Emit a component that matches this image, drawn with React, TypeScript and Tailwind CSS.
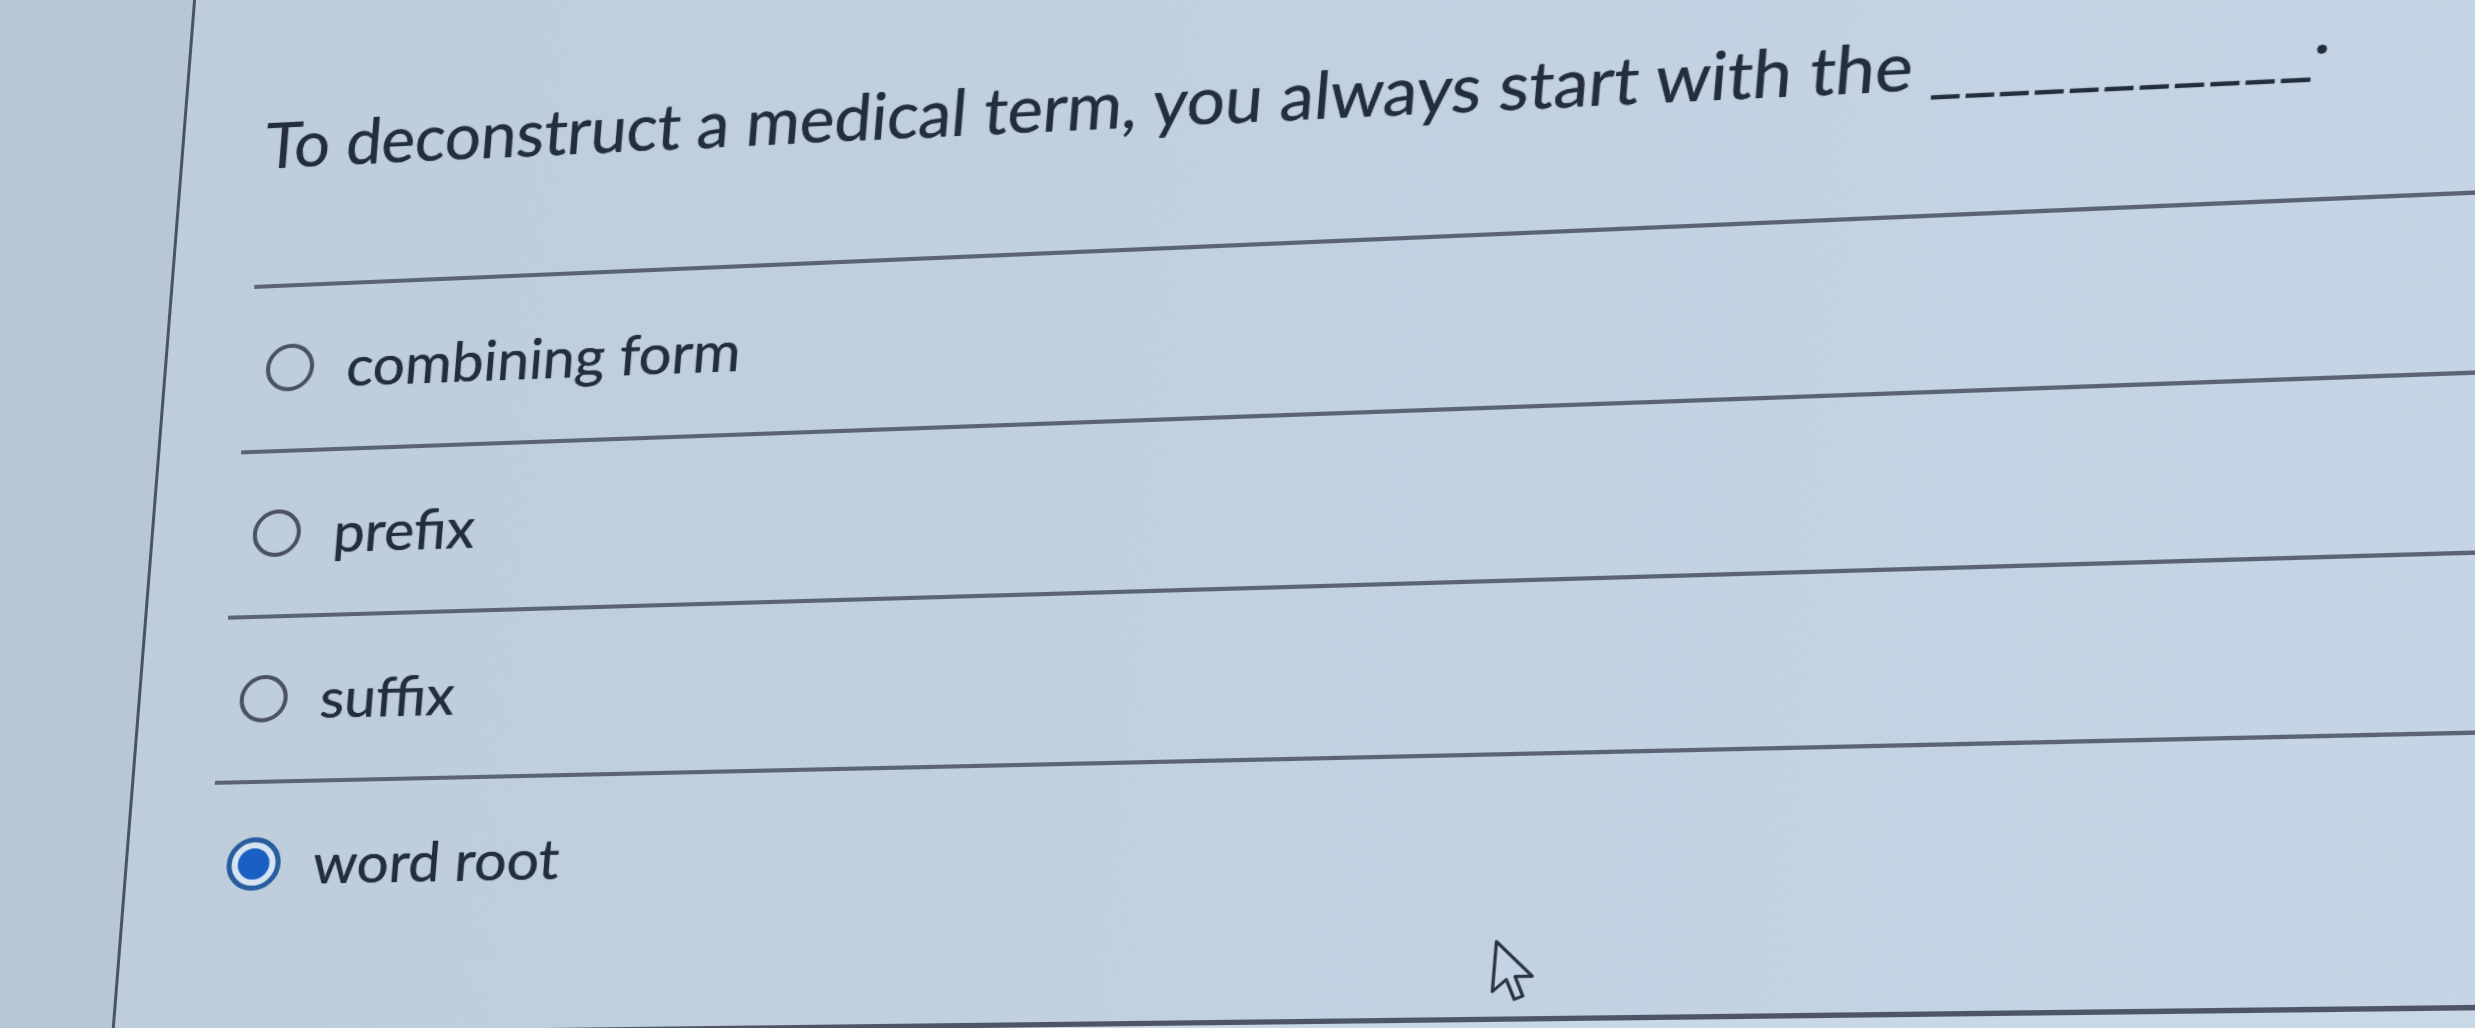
import React from 'react';

type Option = { label: string; selected?: boolean };

const OPTIONS: Option[] = [
  { label: 'combining form' },
  { label: 'prefix' },
  { label: 'suffix' },
  { label: 'word root', selected: true },
];

const Radio: React.FC<{ selected?: boolean }> = ({ selected }) => {
  if (selected) {
    return (
      <span className="w-[53px] h-[53px] shrink-0 rounded-full border-[5px] border-[#2a5d9e] bg-[#d6e3f0] flex items-center justify-center">
        <span className="w-[31px] h-[31px] rounded-full bg-[#1a5fc4]" />
      </span>
    );
  }
  return <span className="w-[47px] h-[47px] shrink-0 rounded-full border-4 border-[#4a5161]" />;
};

const Cursor: React.FC = () => (
  <svg width="40" height="61" viewBox="0 0 13 20" className="absolute left-[1607px] top-[1005px]">
    <path
      d="M1 1 L1 16.5 L4.8 12.8 L7.6 19 L10 18 L7.3 11.9 L12.3 11.9 Z"
      fill="#c4d4e4"
      stroke="#2b3242"
      strokeWidth="0.95"
      strokeLinejoin="round"
    />
  </svg>
);

export default function App() {
  return (
    <div className="w-screen h-[1028px] overflow-hidden bg-[#c1d1e1] font-['Lato','Noto_Sans',sans-serif] text-[#232d3e] [text-shadow:0_0_1px_#232d3e]">
      {/* photo of a screen taken at an angle: one perspective transform for the whole screen */}
      <div className="relative w-[2760px] h-[1220px] -ml-[120px] -mt-[40px] origin-[120px_40px] [transform:perspective(2000px)_rotateY(-4.73deg)_skew(-4.5deg,-3.125deg)] flex">
        {/* left gutter */}
        <div className="w-[316px] shrink-0 bg-[#b8c7d6] border-r-[3px] border-[#4b5363]" />

        {/* question */}
        <div className="flex-1 flex flex-col pl-[80px] pt-[162px] bg-linear-to-r from-[#bdcddc] to-[#c6d6e6]">
          <p className="text-[61.5px] leading-[1.2] whitespace-nowrap">
            To deconstruct a medical term, you always start with the{' '}
            <span className="tracking-[1.5px]">___________</span>
            <span className="relative -top-[0.28em] -ml-[3px]">.</span>
          </p>

          <div className="mt-[101px]">
            {OPTIONS.map((o) => (
              <label
                key={o.label}
                className="h-[164px] border-t-[4px] border-[#5b6474] flex items-center pl-[18px] gap-[32px]"
              >
                <Radio selected={o.selected} />
                <span className="text-[55px] leading-none">{o.label}</span>
              </label>
            ))}
          </div>

          <div className="mt-[86px] h-[5px] bg-[#4d5566]" />
          <div className="flex-1 bg-[#c9d8e7]" />
        </div>

        <Cursor />
      </div>
    </div>
  );
}
